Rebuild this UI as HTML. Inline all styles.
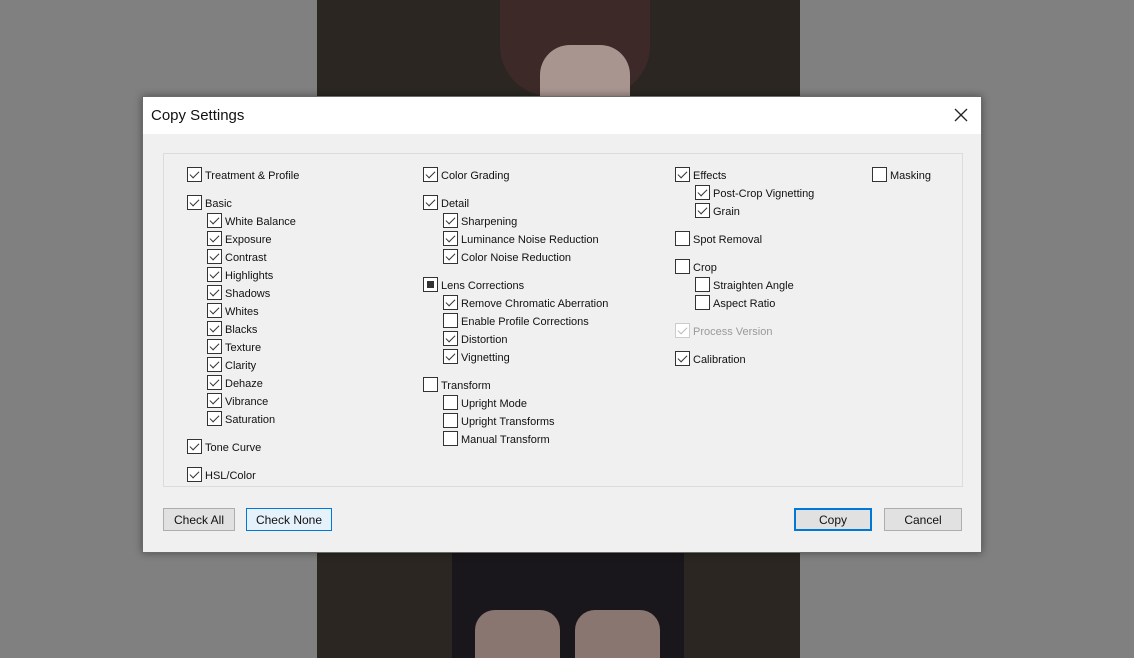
<html><head><style>
body{margin:0;width:1134px;height:658px;background:#808080;position:relative;overflow:hidden;font-family:"Liberation Sans",sans-serif;}
.photo{position:absolute;left:317px;top:0;width:483px;height:658px;background:#2b2621;}
.dlg{position:absolute;left:142px;top:96px;width:838px;height:455px;background:#f0f0f0;border:1px solid #6a6a6a;box-shadow:0 0 8px rgba(0,0,0,.4);}
.title{position:absolute;left:0;top:0;width:838px;height:37px;background:#fff;}
.title span{position:absolute;left:8px;top:10px;font-size:15px;color:#111;}
.grp{position:absolute;left:21px;top:57px;width:798px;height:332px;border:1px solid #dcdcdc;}
.c{position:absolute;font-size:11px;color:#111;white-space:nowrap;line-height:16px;padding-left:18px;padding-top:1px;}
.c i{position:absolute;left:0;top:0;width:13px;height:13px;border:1px solid #333;background:#fff;}
.c.k i::after{content:"";position:absolute;left:4px;top:1px;width:4px;height:8px;border-right:1.3px solid #333;border-bottom:1.3px solid #333;transform:rotate(45deg);}
.c.m i::after{content:"";position:absolute;left:3px;top:3px;width:7px;height:7px;background:#333;}
.c.d{color:#9a9a9a}.c.d i{border-color:#ccc}.c.d i::after{border-color:#bbb}
.btn{position:absolute;top:412px;height:21px;border:1px solid #adadad;background:#e1e1e1;font-size:12px;text-align:center;line-height:22px;color:#111;}
</style></head><body>
<div class="photo"></div>
<div style="position:absolute;left:500px;top:0;width:150px;height:96px;background:#3d2a28;border-radius:0 0 50px 50px"></div>
<div style="position:absolute;left:540px;top:45px;width:90px;height:51px;background:#a99590;border-radius:30px 30px 0 0"></div>
<div style="position:absolute;left:452px;top:552px;width:232px;height:106px;background:#1a171c"></div>
<div style="position:absolute;left:475px;top:610px;width:85px;height:48px;background:#8a7670;border-radius:20px 20px 0 0"></div>
<div style="position:absolute;left:575px;top:610px;width:85px;height:48px;background:#8a7670;border-radius:20px 20px 0 0"></div>
<div class="dlg">
<div class="title"><span>Copy Settings</span>
<svg style="position:absolute;left:811px;top:11px" width="14" height="14"><path d="M1 1L13 13M13 1L1 13" stroke="#222" stroke-width="1.3"/></svg></div>
</div>
<div style="position:absolute;left:0;top:0">
<div class="c k" style="left:187px;top:167px"><i></i>Treatment &amp; Profile</div>
<div class="c k" style="left:187px;top:195px"><i></i>Basic</div>
<div class="c k" style="left:207px;top:213px"><i></i>White Balance</div>
<div class="c k" style="left:207px;top:231px"><i></i>Exposure</div>
<div class="c k" style="left:207px;top:249px"><i></i>Contrast</div>
<div class="c k" style="left:207px;top:267px"><i></i>Highlights</div>
<div class="c k" style="left:207px;top:285px"><i></i>Shadows</div>
<div class="c k" style="left:207px;top:303px"><i></i>Whites</div>
<div class="c k" style="left:207px;top:321px"><i></i>Blacks</div>
<div class="c k" style="left:207px;top:339px"><i></i>Texture</div>
<div class="c k" style="left:207px;top:357px"><i></i>Clarity</div>
<div class="c k" style="left:207px;top:375px"><i></i>Dehaze</div>
<div class="c k" style="left:207px;top:393px"><i></i>Vibrance</div>
<div class="c k" style="left:207px;top:411px"><i></i>Saturation</div>
<div class="c k" style="left:187px;top:439px"><i></i>Tone Curve</div>
<div class="c k" style="left:187px;top:467px"><i></i>HSL/Color</div>

<div class="c k" style="left:423px;top:167px"><i></i>Color Grading</div>
<div class="c k" style="left:423px;top:195px"><i></i>Detail</div>
<div class="c k" style="left:443px;top:213px"><i></i>Sharpening</div>
<div class="c k" style="left:443px;top:231px"><i></i>Luminance Noise Reduction</div>
<div class="c k" style="left:443px;top:249px"><i></i>Color Noise Reduction</div>
<div class="c m" style="left:423px;top:277px"><i></i>Lens Corrections</div>
<div class="c k" style="left:443px;top:295px"><i></i>Remove Chromatic Aberration</div>
<div class="c" style="left:443px;top:313px"><i></i>Enable Profile Corrections</div>
<div class="c k" style="left:443px;top:331px"><i></i>Distortion</div>
<div class="c k" style="left:443px;top:349px"><i></i>Vignetting</div>
<div class="c" style="left:423px;top:377px"><i></i>Transform</div>
<div class="c" style="left:443px;top:395px"><i></i>Upright Mode</div>
<div class="c" style="left:443px;top:413px"><i></i>Upright Transforms</div>
<div class="c" style="left:443px;top:431px"><i></i>Manual Transform</div>

<div class="c k" style="left:675px;top:167px"><i></i>Effects</div>
<div class="c k" style="left:695px;top:185px"><i></i>Post-Crop Vignetting</div>
<div class="c k" style="left:695px;top:203px"><i></i>Grain</div>
<div class="c" style="left:675px;top:231px"><i></i>Spot Removal</div>
<div class="c" style="left:675px;top:259px"><i></i>Crop</div>
<div class="c" style="left:695px;top:277px"><i></i>Straighten Angle</div>
<div class="c" style="left:695px;top:295px"><i></i>Aspect Ratio</div>
<div class="c k d" style="left:675px;top:323px"><i></i>Process Version</div>
<div class="c k" style="left:675px;top:351px"><i></i>Calibration</div>
<div class="c" style="left:872px;top:167px"><i></i>Masking</div>
</div>
<div style="position:absolute;left:142px;top:96px">
<div class="grp"></div>
<div class="btn" style="left:21px;width:70px">Check All</div>
<div class="btn" style="left:104px;width:84px;background:#e5f1fb;border-color:#0078d7">Check None</div>
<div class="btn" style="left:652px;width:74px;border:2px solid #0078d7;height:19px;line-height:20px;background:#e1e1e1">Copy</div>
<div class="btn" style="left:742px;width:76px">Cancel</div>
</div>
</body></html>
